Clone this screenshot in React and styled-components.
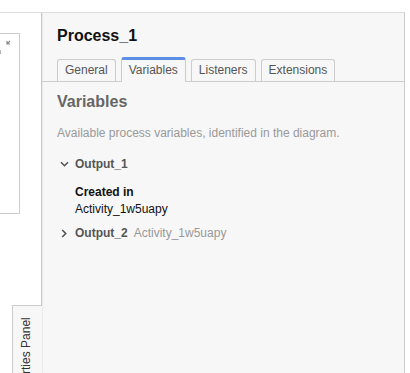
import styled, { createGlobalStyle } from "styled-components";

const Global = createGlobalStyle`
body{
    margin: 0;
    background: #FFFFFF;
    font-family: "Liberation Sans", Arial, sans-serif;
}
`

const tabs = ["General", "Variables", "Listeners", "Extensions"];

export default function App(){
    return(
        <>
            <Global />
            <Page>
                <Frame>
                    <Canvas>
                        <Minimap>
                            <svg width="14" height="14" viewBox="0 0 14 14">
                                <path d="M10 1 L10 4 L13 4 M10 4 L13 1" stroke="#888" strokeWidth="1.2" fill="none"/>
                                <path d="M0 11 L3 11 L3 14" stroke="#999" strokeWidth="1.5" fill="none"/>
                            </svg>
                        </Minimap>
                    </Canvas>
                    <Panel>
                        <Title>Process_1</Title>
                        <Tabs>
                            {tabs.map(tab => <Tab key={tab} active={tab === "Variables"}>{tab}</Tab>)}
                        </Tabs>
                        <Content>
                            <Heading>Variables</Heading>
                            <Description>Available process variables, identified in the diagram.</Description>
                            <Variable first>
                                <Chevron>
                                    <svg width="9" height="6" viewBox="0 0 9 6"><path d="M1 1.2 L4.5 4.7 L8 1.2" stroke="#555" strokeWidth="1.6" fill="none"/></svg>
                                </Chevron>
                                <VarName>Output_1</VarName>
                            </Variable>
                            <Details>
                                <strong>Created in</strong>
                                <span>Activity_1w5uapy</span>
                            </Details>
                            <Variable>
                                <Chevron>
                                    <svg width="6" height="9" viewBox="0 0 6 9"><path d="M1.2 1 L4.7 4.5 L1.2 8" stroke="#555" strokeWidth="1.6" fill="none"/></svg>
                                </Chevron>
                                <VarName>Output_2</VarName>
                                <Origin>Activity_1w5uapy</Origin>
                            </Variable>
                        </Content>
                        <Toggle><span>Properties Panel</span></Toggle>
                    </Panel>
                </Frame>
            </Page>
        </>
    )
}

const Page = styled.div`
width: 405px;
padding-top: 12px;
`

const Frame = styled.div`
display: flex;
height: 361px;
border-top: 1px solid #DDDDDD;
border-right: 1px solid #CCCCCC;
box-sizing: border-box;
overflow: hidden;
`

const Canvas = styled.div`
flex: 1;
background: #FFFFFF;
padding-top: 20px;
`

const Minimap = styled.div`
width: 20px;
height: 181px;
border: 1px solid #CCCCCC;
border-left: none;
box-sizing: border-box;
padding-top: 6px;
svg{
    display: block;
    margin-left: -3px;
}
`

const Panel = styled.div`
position: relative;
width: 363px;
background: #F7F7F7;
border-left: 1px solid #C8C8C8;
box-shadow: inset 1px 0 1px rgba(0,0,0,0.06);
box-sizing: border-box;
`

const Title = styled.div`
font-size: 16px;
font-weight: 700;
color: #111111;
padding: 13px 0 0 15px;
line-height: 20px;
`

const Tabs = styled.div`
display: flex;
gap: 5px;
margin-top: 11px;
padding-left: 15px;
border-bottom: 1px solid #CCCCCC;
height: 24px;
`

const Tab = styled.div`
height: ${p => p.active ? "25px" : "22px"};
margin-top: ${p => p.active ? "0" : "2px"};
padding: 0 7px;
border: 1px solid #CCCCCC;
border-bottom: none;
border-top: ${p => p.active ? "3px solid #5B8FE6" : "1px solid #CCCCCC"};
border-radius: 3px 3px 0 0;
background: #F7F7F7;
box-sizing: border-box;
font-size: 12px;
color: #555555;
line-height: ${p => p.active ? "20px" : "21px"};
position: relative;
z-index: 1;
`

const Content = styled.div`
padding: 10px 15px 0 15px;
`

const Heading = styled.div`
font-size: 16px;
font-weight: 700;
color: #666666;
line-height: 20px;
`

const Description = styled.div`
font-size: 12px;
color: #999999;
margin-top: 14px;
line-height: 14px;
`

const Variable = styled.div`
display: flex;
align-items: center;
gap: 6px;
margin-top: ${p => p.first ? "17px" : "13px"};
font-size: 12px;
line-height: 14px;
`

const Chevron = styled.div`
width: 10px;
display: flex;
justify-content: center;
margin-left: 2px;
svg{
    display: block;
}
`

const VarName = styled.span`
font-weight: 700;
color: #555555;
`

const Origin = styled.span`
color: #999999;
`

const Details = styled.div`
display: flex;
flex-direction: column;
gap: 3px;
margin: 14px 0 -3px 18px;
font-size: 12px;
line-height: 14px;
color: #111111;
strong{
    font-weight: 700;
}
`

const Toggle = styled.div`
position: absolute;
left: -30px;
top: 292px;
width: 30px;
height: 80px;
background: #F7F7F7;
border-top: 1px solid #CCCCCC;
border-left: 1px solid #CCCCCC;
box-sizing: border-box;
span{
    position: absolute;
    left: 6px;
    top: 12px;
    writing-mode: vertical-rl;
    transform: rotate(180deg);
    font-size: 12px;
    color: #333333;
    white-space: nowrap;
    height: 88px;
    text-align: right;
}
`
